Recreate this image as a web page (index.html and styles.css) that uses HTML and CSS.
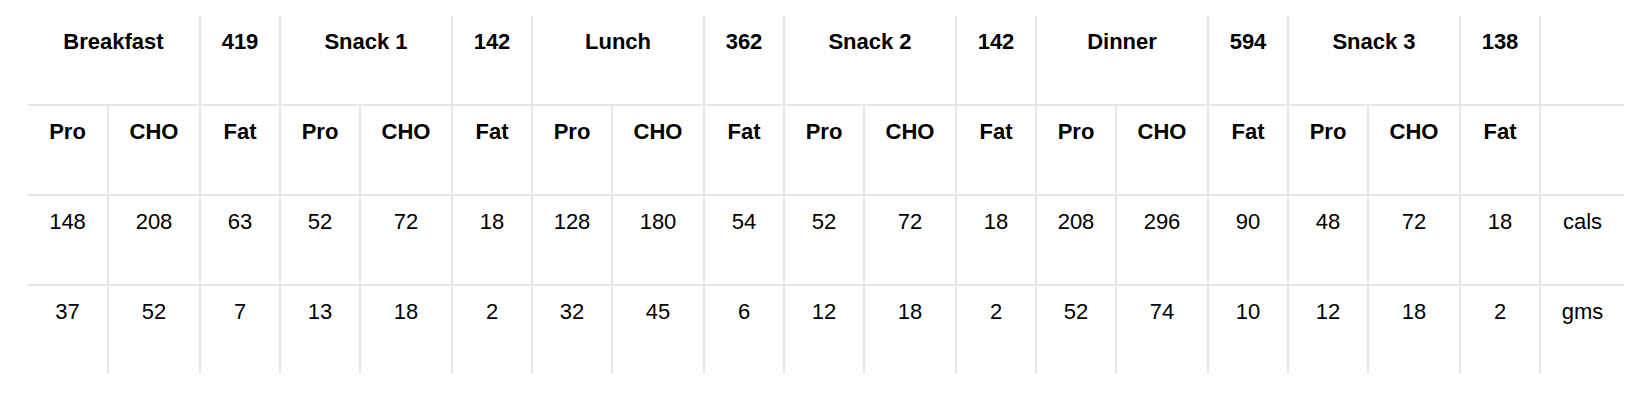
FILE: index.html
```html
<!DOCTYPE html>
<html lang="en">
<head>
<meta charset="utf-8">
<title>Meal macros</title>
<link rel="stylesheet" href="styles.css">
</head>
<body>
<div class="macro-grid">
  <div class="cell head first span2">Breakfast</div>
  <div class="cell head">419</div>
  <div class="cell head span2">Snack 1</div>
  <div class="cell head">142</div>
  <div class="cell head span2">Lunch</div>
  <div class="cell head">362</div>
  <div class="cell head span2">Snack 2</div>
  <div class="cell head">142</div>
  <div class="cell head span2">Dinner</div>
  <div class="cell head">594</div>
  <div class="cell head span2">Snack 3</div>
  <div class="cell head">138</div>
  <div class="cell head"></div>

  <div class="cell head row first">Pro</div>
  <div class="cell head row">CHO</div>
  <div class="cell head row">Fat</div>
  <div class="cell head row">Pro</div>
  <div class="cell head row">CHO</div>
  <div class="cell head row">Fat</div>
  <div class="cell head row">Pro</div>
  <div class="cell head row">CHO</div>
  <div class="cell head row">Fat</div>
  <div class="cell head row">Pro</div>
  <div class="cell head row">CHO</div>
  <div class="cell head row">Fat</div>
  <div class="cell head row">Pro</div>
  <div class="cell head row">CHO</div>
  <div class="cell head row">Fat</div>
  <div class="cell head row">Pro</div>
  <div class="cell head row">CHO</div>
  <div class="cell head row">Fat</div>
  <div class="cell head row"></div>

  <div class="cell row first">148</div>
  <div class="cell row">208</div>
  <div class="cell row">63</div>
  <div class="cell row">52</div>
  <div class="cell row">72</div>
  <div class="cell row">18</div>
  <div class="cell row">128</div>
  <div class="cell row">180</div>
  <div class="cell row">54</div>
  <div class="cell row">52</div>
  <div class="cell row">72</div>
  <div class="cell row">18</div>
  <div class="cell row">208</div>
  <div class="cell row">296</div>
  <div class="cell row">90</div>
  <div class="cell row">48</div>
  <div class="cell row">72</div>
  <div class="cell row">18</div>
  <div class="cell row">cals</div>

  <div class="cell row first">37</div>
  <div class="cell row">52</div>
  <div class="cell row">7</div>
  <div class="cell row">13</div>
  <div class="cell row">18</div>
  <div class="cell row">2</div>
  <div class="cell row">32</div>
  <div class="cell row">45</div>
  <div class="cell row">6</div>
  <div class="cell row">12</div>
  <div class="cell row">18</div>
  <div class="cell row">2</div>
  <div class="cell row">52</div>
  <div class="cell row">74</div>
  <div class="cell row">10</div>
  <div class="cell row">12</div>
  <div class="cell row">18</div>
  <div class="cell row">2</div>
  <div class="cell row">gms</div>
</div>
</body>
</html>
```

FILE: styles.css
```css
html, body {
  margin: 0;
  padding: 0;
  background: #ffffff;
}

body {
  padding: 16px 28px;
  font-family: "Liberation Sans", Arial, Helvetica, sans-serif;
  font-size: 22px;
  line-height: 32px;
  color: #000000;
}

.macro-grid {
  display: grid;
  width: 1596px;
  grid-template-columns:
    79px 92px 80px
    80px 92px 80px
    80px 92px 80px
    80px 92px 80px
    80px 92px 80px
    80px 92px 80px
    85px;
  grid-auto-rows: auto;
}

.cell {
  box-sizing: border-box;
  height: 88px;
  padding-top: 10px;
  text-align: center;
  border-left: 2px solid #e5e5e5;
  white-space: nowrap;
}

.cell.row {
  height: 90px;
  border-top: 2px solid #e5e5e5;
}

.cell.first {
  border-left: none;
}

.cell.head {
  font-weight: bold;
}

.span2 {
  grid-column: span 2;
}
```
